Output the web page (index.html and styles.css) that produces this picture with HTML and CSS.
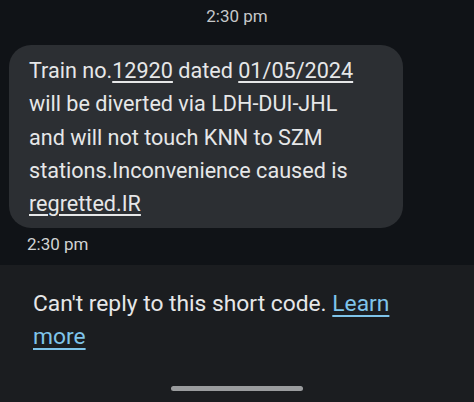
FILE: index.html
```html
<!DOCTYPE html>
<html lang="en">
<head>
	<meta charset="UTF-8">
	<title>Messages</title>
	<link rel="stylesheet" href="styles.css">
</head>
<body>
	<div id="screen">
		<section class="thread">
			<div class="time-top">2:30 pm</div>
			<div class="bubble">
				Train no.<u>12920</u> dated <u>01/05/2024</u> will be diverted via LDH-DUI-JHL and will not touch KNN to SZM stations.Inconvenience caused is <u>regretted.IR</u>
			</div>
			<div class="time-under">2:30 pm</div>
		</section>
		<footer class="notice">
			<p class="notice-text">Can't reply to this short code. <a href="javascript:;">Learn more</a></p>
			<div class="home-bar"></div>
		</footer>
	</div>
</body>
</html>
```

FILE: styles.css
```css
body {
	margin: 0;
	background: #101317;
	font-family: Roboto, "Noto Sans", Arial, sans-serif;
}
#screen {
	width: 474px;
	height: 402px;
	display: flex;
	flex-direction: column;
	overflow: hidden;
}
.thread {
	padding-top: 6px;
}
.time-top {
	font-size: 17px;
	line-height: 20px;
	color: #c6c8ca;
	text-align: center;
}
.bubble {
	box-sizing: border-box;
	width: 394px;
	margin: 19px 0 0 9px;
	padding: 9px 36px 8px 20px;
	border-radius: 22px;
	background: #2c2f33;
	color: #e6e7e8;
	font-size: 21.6px;
	line-height: 33.25px;
}
.bubble u {
	text-decoration-thickness: 2px;
	text-underline-offset: 3px;
}
.time-under {
	margin-top: 6px;
	padding-left: 27px;
	font-size: 17px;
	line-height: 20px;
	color: #d0d2d4;
}
.notice {
	flex: 1;
	margin-top: 11px;
	background: #1b1d20;
	padding: 22px 54px 0 33px;
}
.notice-text {
	margin: 0;
	font-size: 22.8px;
	line-height: 33px;
	color: #e6e7e8;
}
.notice-text a {
	color: #7fc4ea;
	text-decoration-thickness: 2px;
	text-underline-offset: 4px;
}
.home-bar {
	width: 132px;
	height: 5px;
	margin: 33px 0 0 138px;
	border-radius: 3px;
	background: #9a9c9e;
}
```
